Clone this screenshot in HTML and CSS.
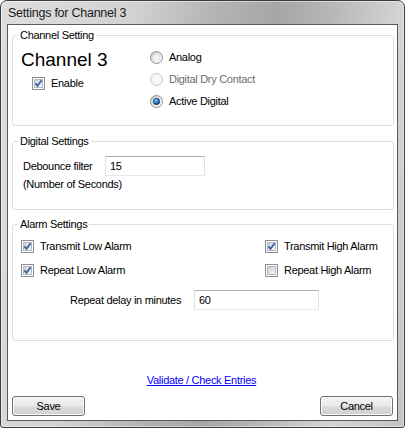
FILE: index.html
```html
<!DOCTYPE html>
<html>
<head>
<meta charset="utf-8">
<title>Settings for Channel 3</title>
<link rel="stylesheet" href="styles.css">
</head>
<body>
<svg class="defs" width="0" height="0" aria-hidden="true">
  <defs>
    <linearGradient id="cbFill" x1="0" y1="0" x2="1" y2="1">
      <stop offset="0" stop-color="#c9ced6"/>
      <stop offset="1" stop-color="#f8f8f8"/>
    </linearGradient>
    <linearGradient id="rdFill" x1="0" y1="0" x2="1" y2="1">
      <stop offset="0" stop-color="#c4c4c4"/>
      <stop offset="0.6" stop-color="#eeeeee"/>
      <stop offset="1" stop-color="#ffffff"/>
    </linearGradient>
    <radialGradient id="rdDot" cx="0.4" cy="0.35" r="0.7">
      <stop offset="0" stop-color="#8ed0f8"/>
      <stop offset="0.5" stop-color="#2f7cc8"/>
      <stop offset="1" stop-color="#0d2f6a"/>
    </radialGradient>
  </defs>
</svg>
<div class="window">
  <div class="titlebar">Settings for Channel 3</div>
  <div class="client">
    <section class="group g1">
      <div class="gtitle">Channel Setting</div>
      <div class="g1-body">
        <div class="g1-left">
          <div class="chan">Channel 3</div>
          <div class="opt enable">
            <svg class="ico" viewBox="0 0 13 13"><rect x=".5" y=".5" width="12" height="12" fill="#fff" stroke="#8e8f8f"/><rect x="2.5" y="2.5" width="8" height="8" fill="url(#cbFill)" stroke="#b4bac2"/><path d="M3.4 6.3 5.5 8.8 9.7 3.3" fill="none" stroke="#3d63a8" stroke-width="1.8"/></svg>
            <span>Enable</span>
          </div>
        </div>
        <div class="radios">
          <div class="opt">
            <svg class="ico" viewBox="0 0 13 13"><circle cx="6.5" cy="6.5" r="6" fill="url(#rdFill)" stroke="#8e8f8f"/><circle cx="6.5" cy="6.5" r="3.6" fill="#f4f4f4" stroke="#d8d8d8" stroke-width=".6"/></svg>
            <span>Analog</span>
          </div>
          <div class="opt disabled">
            <svg class="ico" viewBox="0 0 13 13"><circle cx="6.5" cy="6.5" r="6" fill="#f4f4f4" stroke="#c9c9c9"/><circle cx="6.5" cy="6.5" r="3.6" fill="#f7f7f7"/></svg>
            <span>Digital Dry Contact</span>
          </div>
          <div class="opt">
            <svg class="ico" viewBox="0 0 13 13"><circle cx="6.5" cy="6.5" r="6" fill="url(#rdFill)" stroke="#8e8f8f"/><circle cx="6.5" cy="6.5" r="3.2" fill="url(#rdDot)" stroke="#1f3f73" stroke-width=".7"/></svg>
            <span>Active Digital</span>
          </div>
        </div>
      </div>
    </section>

    <section class="group g2">
      <div class="gtitle">Digital Settings</div>
      <div class="g2-body">
        <div class="row">
          <span class="lbl-deb">Debounce filter</span>
          <input class="tb tb-deb" type="text" value="15">
        </div>
        <div class="note">(Number of Seconds)</div>
      </div>
    </section>

    <section class="group g3">
      <div class="gtitle">Alarm Settings</div>
      <div class="g3-body">
        <div class="alarms">
          <div class="opt">
            <svg class="ico" viewBox="0 0 13 13"><rect x=".5" y=".5" width="12" height="12" fill="#fff" stroke="#8e8f8f"/><rect x="2.5" y="2.5" width="8" height="8" fill="url(#cbFill)" stroke="#b4bac2"/><path d="M3.4 6.3 5.5 8.8 9.7 3.3" fill="none" stroke="#3d63a8" stroke-width="1.8"/></svg>
            <span>Transmit Low Alarm</span>
          </div>
          <div class="opt">
            <svg class="ico" viewBox="0 0 13 13"><rect x=".5" y=".5" width="12" height="12" fill="#fff" stroke="#8e8f8f"/><rect x="2.5" y="2.5" width="8" height="8" fill="url(#cbFill)" stroke="#b4bac2"/><path d="M3.4 6.3 5.5 8.8 9.7 3.3" fill="none" stroke="#3d63a8" stroke-width="1.8"/></svg>
            <span>Transmit High Alarm</span>
          </div>
          <div class="opt">
            <svg class="ico" viewBox="0 0 13 13"><rect x=".5" y=".5" width="12" height="12" fill="#fff" stroke="#8e8f8f"/><rect x="2.5" y="2.5" width="8" height="8" fill="url(#cbFill)" stroke="#b4bac2"/><path d="M3.4 6.3 5.5 8.8 9.7 3.3" fill="none" stroke="#3d63a8" stroke-width="1.8"/></svg>
            <span>Repeat Low Alarm</span>
          </div>
          <div class="opt">
            <svg class="ico" viewBox="0 0 13 13"><rect x=".5" y=".5" width="12" height="12" fill="#fff" stroke="#8e8f8f"/><rect x="2.5" y="2.5" width="8" height="8" fill="url(#cbFill)" stroke="#b4bac2"/></svg>
            <span>Repeat High Alarm</span>
          </div>
        </div>
        <div class="row delay">
          <span class="lbl-delay">Repeat delay in minutes</span>
          <input class="tb tb-delay" type="text" value="60">
        </div>
      </div>
    </section>

    <div class="linkline"><a class="link" href="#">Validate / Check Entries</a></div>

    <div class="buttons">
      <button class="btn" type="button">Save</button>
      <button class="btn" type="button">Cancel</button>
    </div>
  </div>
</div>
</body>
</html>
```

FILE: styles.css
```css
html, body {
  margin: 0;
  padding: 0;
  background: #ffffff;
}

.defs {
  display: block;
  width: 0;
  height: 0;
  overflow: hidden;
}

.window {
  box-sizing: border-box;
  width: 405px;
  height: 428px;
  border: 1px solid #3e3e3e;
  border-radius: 7px 7px 3px 3px;
  padding: 0 6px 6px 6px;
  background: linear-gradient(100deg, #dedede 0%, #d2d2d2 28%, #b4b4b4 45%, #a6a6a6 58%, #b8b8b8 70%, #d4d4d4 84%, #c4c4c4 100%);
  box-shadow: inset 0 0 0 1px rgba(255, 255, 255, 0.45);
  font-family: "Liberation Sans", Arial, sans-serif;
  font-size: 11px;
  letter-spacing: -0.3px;
  color: #000;
}

.titlebar {
  box-sizing: border-box;
  height: 23px;
  padding: 1px 0 0 1px;
  line-height: 22px;
  font-size: 12.5px;
  letter-spacing: -0.25px;
  color: #1b1b1b;
}

.client {
  box-sizing: border-box;
  height: 397px;
  border: 1px solid #5a5a5a;
  background: #ffffff;
  padding: 10px 3px 0 4px;
  display: flex;
  flex-direction: column;
}

.group {
  box-sizing: border-box;
  border: 1px solid #d5dfe5;
  border-radius: 3px;
}

.g1 { height: 91px; }
.g2 { height: 69px; margin-top: 15px; }
.g3 { height: 117px; margin-top: 14px; }

.gtitle {
  width: fit-content;
  margin: -7px 0 0 5px;
  padding: 0 2px;
  background: #ffffff;
  line-height: 13px;
}

.opt {
  display: flex;
  align-items: center;
  gap: 6px;
  height: 13px;
  line-height: 13px;
  white-space: nowrap;
}

.opt.disabled { color: #6d6d6d; }

.ico {
  display: block;
  width: 13px;
  height: 13px;
  flex: none;
}

/* Channel setting */
.g1-body {
  display: flex;
}

.g1-left {
  box-sizing: border-box;
  width: 137px;
  padding-left: 8px;
}

.chan {
  margin-top: 7px;
  font-size: 19px;
  line-height: 21px;
  letter-spacing: 0;
}

.enable {
  margin: 7px 0 0 11px;
}

.radios {
  margin-top: 9px;
  display: flex;
  flex-direction: column;
  gap: 9px;
}

/* Digital settings */
.g2-body {
  padding: 8px 0 0 10px;
}

.row {
  display: flex;
  align-items: center;
}

.lbl-deb {
  width: 82px;
  flex: none;
}

.tb {
  box-sizing: border-box;
  height: 20px;
  margin: 0;
  padding: 0 0 0 4px;
  border: 1px solid;
  border-color: #abadb3 #e2e3ea #e3e9ef #dbdfe6;
  border-radius: 0;
  background: #ffffff;
  font-family: inherit;
  font-size: 11px;
  letter-spacing: -0.3px;
  color: #000;
  outline: none;
}

.tb-deb { width: 100px; }

.note {
  margin-top: 2px;
  line-height: 13px;
}

/* Alarm settings */
.g3-body {
  padding: 9px 0 0 8px;
}

.alarms {
  display: grid;
  grid-template-columns: 244px auto;
  row-gap: 11px;
}

.delay {
  margin: 13px 0 0 49px;
}

.lbl-delay {
  width: 124px;
  flex: none;
}

.tb-delay { width: 125px; }

/* Footer */
.linkline {
  margin-top: 33px;
  line-height: 13px;
  text-align: center;
  padding-right: 3px;
}

.link {
  color: #0000ff;
  text-decoration: underline;
}

.buttons {
  margin: 9px 1px 0 0;
  display: flex;
  justify-content: space-between;
}

.btn {
  box-sizing: border-box;
  width: 73px;
  height: 20px;
  margin: 0;
  padding: 0;
  border: 1px solid #707070;
  border-radius: 3px;
  background: linear-gradient(#f2f2f2 0%, #ebebeb 48%, #dddddd 52%, #cfcfcf 100%);
  box-shadow: inset 0 0 0 1px #fbfbfb;
  font-family: "Liberation Sans", Arial, sans-serif;
  font-size: 11px;
  letter-spacing: -0.3px;
  color: #000;
  line-height: 18px;
}
```
